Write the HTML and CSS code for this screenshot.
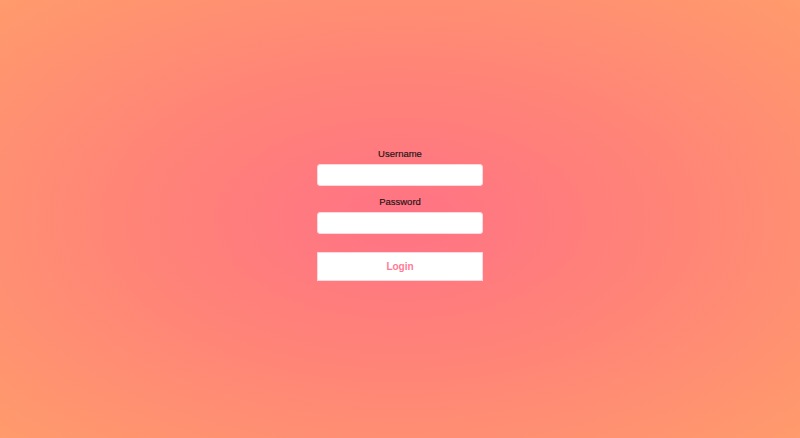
FILE: index.html
```html
<!DOCTYPE html>
<html>
<head>
<meta charset="utf-8">
<link rel="stylesheet" href="styles.css">
</head>
<body>
<main class="page">
  <form class="login">
    <label class="label" for="u">Username</label>
    <input class="field" id="u" type="text">
    <label class="label label-pw" for="p">Password</label>
    <input class="field" id="p" type="password">
    <button class="btn" type="button">Login</button>
  </form>
</main>
</body>
</html>
```
FILE: styles.css
```css
html, body {
  margin: 0;
  padding: 0;
  height: 100%;
}
body {
  font-family: "Liberation Sans", Arial, sans-serif;
  background: radial-gradient(ellipse farthest-corner at 50% 50%, #ff7385 0%, #ff8378 45%, #ff9b6c 100%);
}
.page {
  height: 438px;
  display: flex;
  align-items: flex-start;
  justify-content: center;
}
.login {
  width: 166px;
  margin-top: 147px;
  display: flex;
  flex-direction: column;
  align-items: stretch;
}
.label {
  font-size: 9.5px;
  color: #1e1214;
  text-align: center;
  line-height: 14px;
  height: 14px;
  margin-bottom: 3px;
  -webkit-text-stroke: 0.15px #1e1214;
}
.label-pw {
  margin-top: 9px;
}
.field {
  box-sizing: border-box;
  height: 22px;
  margin: 0;
  border: 1px solid #ffd6dc;
  border-radius: 3px;
  background: #fff;
  outline: none;
}
.btn {
  margin-top: 18px;
  height: 29px;
  border: 1px solid #ffd6dc;
  border-radius: 0;
  background: #fff;
  color: #ff7b95;
  font-family: "Liberation Sans", Arial, sans-serif;
  font-weight: bold;
  font-size: 10px;
  padding: 0;
}
```
